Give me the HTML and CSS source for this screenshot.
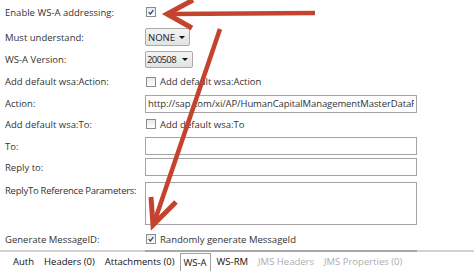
FILE: index.html
```html
<!DOCTYPE html>
<html>
<head>
    <title>WS-A</title>
    <link rel="stylesheet" href="styles.css">
</head>
<body>
    <div class="form">
        <div class="label">Enable WS-A addressing:</div>
        <div class="field"><span class="check checked"><svg viewBox="0 0 10 10"><path d="M2 5.2 L4.2 7.4 L8 2.6" /></svg></span></div>

        <div class="label">Must understand:</div>
        <div class="field"><span class="select sel-none">NONE<i class="caret"></i></span></div>

        <div class="label">WS-A Version:</div>
        <div class="field"><span class="select sel-version">200508<i class="caret"></i></span></div>

        <div class="label">Add default wsa:Action:</div>
        <div class="field"><span class="check"></span><span class="check-text">Add default wsa:Action</span></div>

        <div class="label">Action:</div>
        <div class="field"><input class="text" type="text" value="http://sap.com/xi/AP/HumanCapitalManagementMasterDataReplication"></div>

        <div class="label">Add default wsa:To:</div>
        <div class="field"><span class="check"></span><span class="check-text">Add default wsa:To</span></div>

        <div class="label">To:</div>
        <div class="field"><input class="text" type="text"></div>

        <div class="label">Reply to:</div>
        <div class="field"><input class="text" type="text"></div>

        <div class="label label-top">ReplyTo Reference Parameters:</div>
        <div class="field"><textarea class="area"></textarea></div>

        <div class="label">Generate MessageID:</div>
        <div class="field"><span class="check checked"><svg viewBox="0 0 10 10"><path d="M2 5.2 L4.2 7.4 L8 2.6" /></svg></span><span class="check-text">Randomly generate MessageId</span></div>
    </div>

    <div class="rule"><span></span></div>

    <div class="tabs">
        <span class="tab">Auth</span>
        <span class="tab">Headers (0)</span>
        <span class="tab">Attachments (0)</span>
        <span class="tab active">WS-A</span>
        <span class="tab">WS-RM</span>
        <span class="tab disabled">JMS Headers</span>
        <span class="tab disabled">JMS Properties (0)</span>
    </div>

    <!-- annotation arrows drawn over the form -->
    <svg class="arrows" viewBox="0 0 474 271">
        <line x1="315" y1="13" x2="170" y2="14" />
        <polyline points="193,0 167,14 192,28" />
        <line x1="220" y1="29" x2="155" y2="220" />
        <polyline points="151,197 153,225 176,202" />
    </svg>
</body>
</html>
```

FILE: styles.css
```css
html {
    background-color: #fff;
    margin: 0;
    padding: 0;
}

body {
    margin: 0;
    padding: 0;
    height: 271px;
    overflow: hidden;
    position: relative;
    font-family: "Open Sans", "DejaVu Sans", sans-serif;
    font-size: 9.5px;
    color: #333;
}

.form {
    display: grid;
    grid-template-columns: 145px 272px;
    grid-template-rows: 24px 26px 18px 27px 17px 24px 20px 22px 50px 22px;
    align-items: center;
}

.label {
    padding-left: 5px;
    white-space: nowrap;
}

.label-top {
    align-self: start;
    padding-top: 6px;
    letter-spacing: -0.25px;
}

.field {
    display: flex;
    align-items: center;
}

.check {
    display: inline-block;
    box-sizing: border-box;
    width: 10px;
    height: 10px;
    margin-left: 1px;
    border: 1px solid #8c8c8c;
    background: linear-gradient(#e9e9e9, #fff);
}

    .check svg {
        display: block;
        width: 8px;
        height: 8px;
        fill: none;
        stroke: #27457e;
        stroke-width: 1.6;
    }

.check-text {
    margin-left: 4px;
    color: #333;
}

.select {
    display: flex;
    align-items: center;
    box-sizing: border-box;
    height: 18px;
    padding-left: 2px;
    border: 1px solid #a9a9a9;
    border-radius: 2px;
    background: linear-gradient(#f4f4f4, #e2e2e2);
    color: #222;
}

.sel-none {
    width: 45px;
}

.sel-version {
    width: 48px;
    height: 17px;
    padding-left: 1px;
    letter-spacing: -0.6px;
}

.caret {
    margin-left: auto;
    margin-right: 4px;
    width: 0;
    height: 0;
    border-left: 3px solid transparent;
    border-right: 3px solid transparent;
    border-top: 3px solid #111;
}

.text {
    box-sizing: border-box;
    width: 272px;
    height: 18px;
    margin: 0;
    padding: 0 2px;
    border: 1px solid #a4a4a4;
    font: inherit;
    letter-spacing: -0.1px;
    color: #333;
    outline: none;
}

.area {
    box-sizing: border-box;
    width: 272px;
    height: 43px;
    margin: 0;
    border: 1px solid #a4a4a4;
    resize: none;
    outline: none;
}

.rule {
    height: 2px;
    background-color: #d2d2d2;
}

    .rule span {
        display: block;
        margin-left: 145px;
        width: 272px;
        height: 2px;
        background-color: #a9a9a9;
    }

.tabs {
    display: flex;
    align-items: flex-end;
    height: 19px;
    padding-left: 8px;
    color: #111;
}

.tab {
    box-sizing: border-box;
    height: 18px;
    line-height: 17px;
    padding: 0 5px;
    white-space: nowrap;
}

    .tab.active {
        border: 1px solid #a0a0a0;
        border-bottom: none;
        padding: 0 3px;
        margin: 0 1px 0 0;
    }

    .tab.disabled {
        color: #adadad;
    }

.arrows {
    position: absolute;
    left: 0;
    top: 0;
    width: 474px;
    height: 271px;
    pointer-events: none;
    fill: none;
    stroke: #c4432e;
    stroke-width: 4.5;
}

    .arrows polyline {
        stroke-width: 5;
    }
```
